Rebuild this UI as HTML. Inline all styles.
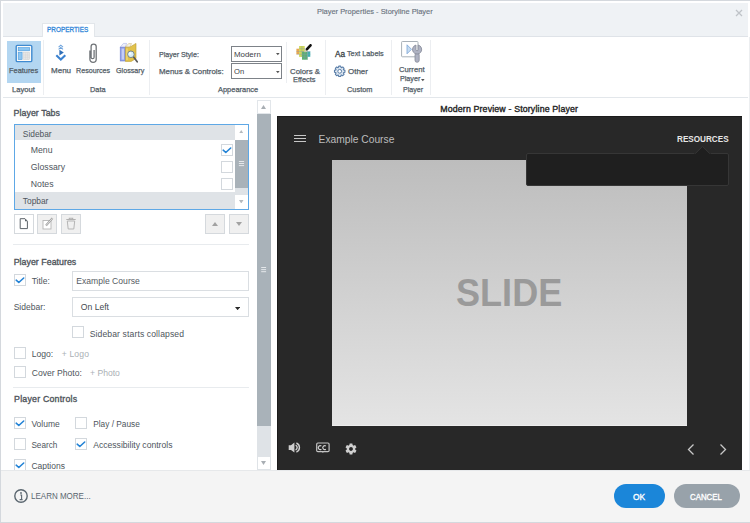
<!DOCTYPE html>
<html><head><meta charset="utf-8"><style>
html,body{margin:0;padding:0;}
body{width:750px;height:523px;position:relative;overflow:hidden;background:#fff;font-family:"Liberation Sans",sans-serif;}
body>div,body>svg{position:absolute;}
.t{white-space:nowrap;line-height:1;}
</style></head><body>
<div style="left:0px;top:0px;width:750px;height:1px;background:#d4d8dd"></div>
<div style="left:0px;top:0px;width:1px;height:523px;background:#d4d8dd"></div>
<div style="left:0px;top:522px;width:750px;height:1px;background:#d4d8dd"></div>
<div style="left:3px;top:3px;width:745px;height:34px;background:#eff2f5"></div>
<div style="left:3px;top:36px;width:745px;height:1px;background:#dfe3e8"></div>
<div class="t" style="left:317.3px;top:7.70px;font-size:8.0px;color:#6b7480;font-weight:400;-webkit-text-stroke:0.15px #6b7480;transform:scaleX(0.9294);transform-origin:0 0;">Player Properties - Storyline Player</div>
<svg style="left:735px;top:8.5px" width="8" height="8" viewBox="0 0 8 8"><path d="M1 1L7 7M7 1L1 7" stroke="#bfc3c8" stroke-width="1.3"/></svg>
<div style="left:41.5px;top:23px;width:53px;height:14px;background:#fff;border:1px solid #e2e6ea;border-bottom:none;box-sizing:border-box"></div>
<div class="t" style="left:47px;top:26.40px;font-size:7.8px;color:#2f86d8;font-weight:400;-webkit-text-stroke:0.3px #2f86d8;transform:scaleX(0.8217);transform-origin:0 0;">PROPERTIES</div>
<div style="left:3px;top:37px;width:745px;height:60px;background:#fff"></div>
<div style="left:3px;top:96.5px;width:745px;height:1px;background:#e3e7eb"></div>
<div style="left:43px;top:40px;width:1px;height:55px;background:#eceef1"></div>
<div style="left:149px;top:40px;width:1px;height:55px;background:#eceef1"></div>
<div style="left:325px;top:40px;width:1px;height:55px;background:#eceef1"></div>
<div style="left:391px;top:40px;width:1px;height:55px;background:#eceef1"></div>
<div style="left:430px;top:40px;width:1px;height:55px;background:#eceef1"></div>
<div style="left:285.5px;top:42px;width:1px;height:41px;background:#eceef1"></div>
<div style="left:7px;top:41px;width:34px;height:42px;background:#b3d6f1"></div>
<div class="t" style="left:9.2px;top:67.25px;font-size:7.9px;color:#515b65;font-weight:400;-webkit-text-stroke:0.25px #515b65;transform:scaleX(0.9367);transform-origin:0 0;">Features</div>
<div class="t" style="left:12.3px;top:85.95px;font-size:7.9px;color:#515b65;font-weight:400;-webkit-text-stroke:0.25px #515b65;transform:scaleX(0.9613);transform-origin:0 0;">Layout</div>
<div class="t" style="left:51px;top:67.25px;font-size:7.9px;color:#515b65;font-weight:400;-webkit-text-stroke:0.25px #515b65;transform:scaleX(1.0172);transform-origin:0 0;">Menu</div>
<div class="t" style="left:75.9px;top:67.25px;font-size:7.9px;color:#515b65;font-weight:400;-webkit-text-stroke:0.25px #515b65;transform:scaleX(0.9058);transform-origin:0 0;">Resources</div>
<div class="t" style="left:115.5px;top:67.25px;font-size:7.9px;color:#515b65;font-weight:400;-webkit-text-stroke:0.25px #515b65;transform:scaleX(0.9080);transform-origin:0 0;">Glossary</div>
<div class="t" style="left:89.8px;top:85.95px;font-size:7.9px;color:#515b65;font-weight:400;-webkit-text-stroke:0.25px #515b65;transform:scaleX(0.9349);transform-origin:0 0;">Data</div>
<div class="t" style="left:159px;top:50.95px;font-size:7.9px;color:#515b65;font-weight:400;-webkit-text-stroke:0.25px #515b65;transform:scaleX(0.8998);transform-origin:0 0;">Player Style:</div>
<div class="t" style="left:159px;top:68.15px;font-size:7.9px;color:#515b65;font-weight:400;-webkit-text-stroke:0.25px #515b65;transform:scaleX(0.9957);transform-origin:0 0;">Menus &amp; Controls:</div>
<div style="left:231px;top:46px;width:51px;height:15.5px;border:1px solid #7d8288;box-sizing:border-box;background:#fff"></div>
<div style="left:231px;top:63.2px;width:51px;height:16px;border:1px solid #7d8288;box-sizing:border-box;background:#fff"></div>
<div class="t" style="left:233.6px;top:50.95px;font-size:7.9px;color:#3c4046;font-weight:400;transform:scaleX(1.0006);transform-origin:0 0;">Modern</div>
<div class="t" style="left:233.6px;top:68.15px;font-size:7.9px;color:#3c4046;font-weight:400;transform:scaleX(0.9584);transform-origin:0 0;">On</div>
<svg style="left:276px;top:53.4px" width="4" height="3"><path d="M0 0H3.6L1.8 2.2Z" fill="#555"/></svg>
<svg style="left:276px;top:70.8px" width="4" height="3"><path d="M0 0H3.6L1.8 2.2Z" fill="#555"/></svg>
<div class="t" style="left:218.3px;top:85.95px;font-size:7.9px;color:#515b65;font-weight:400;-webkit-text-stroke:0.25px #515b65;transform:scaleX(0.9436);transform-origin:0 0;">Appearance</div>
<div class="t" style="left:289.8px;top:67.85px;font-size:7.9px;color:#515b65;font-weight:400;-webkit-text-stroke:0.25px #515b65;transform:scaleX(0.9904);transform-origin:0 0;">Colors &amp;</div>
<div class="t" style="left:293.1px;top:76.15px;font-size:7.9px;color:#515b65;font-weight:400;-webkit-text-stroke:0.25px #515b65;transform:scaleX(0.9374);transform-origin:0 0;">Effects</div>
<div class="t" style="left:334.9px;top:49.85px;font-size:8.3px;color:#3a3f45;font-weight:400;-webkit-text-stroke:0.3px #3a3f45;transform:scaleX(0.9949);transform-origin:0 0;">Aa</div>
<div class="t" style="left:347.3px;top:50.45px;font-size:7.9px;color:#515b65;font-weight:400;-webkit-text-stroke:0.25px #515b65;transform:scaleX(0.9184);transform-origin:0 0;">Text Labels</div>
<div class="t" style="left:347.9px;top:68.15px;font-size:7.9px;color:#515b65;font-weight:400;-webkit-text-stroke:0.25px #515b65;transform:scaleX(1.0073);transform-origin:0 0;">Other</div>
<div class="t" style="left:346.9px;top:86.15px;font-size:7.9px;color:#515b65;font-weight:400;-webkit-text-stroke:0.25px #515b65;transform:scaleX(0.9369);transform-origin:0 0;">Custom</div>
<div class="t" style="left:399.1px;top:66.25px;font-size:7.9px;color:#515b65;font-weight:400;-webkit-text-stroke:0.25px #515b65;transform:scaleX(0.9719);transform-origin:0 0;">Current</div>
<div class="t" style="left:400.1px;top:74.55px;font-size:7.9px;color:#515b65;font-weight:400;-webkit-text-stroke:0.25px #515b65;transform:scaleX(0.9066);transform-origin:0 0;">Player</div>
<svg style="left:421px;top:79px" width="4" height="3"><path d="M0 0H3.6L1.8 2.2Z" fill="#555"/></svg>
<div class="t" style="left:402.6px;top:86.15px;font-size:7.9px;color:#515b65;font-weight:400;-webkit-text-stroke:0.25px #515b65;transform:scaleX(0.8977);transform-origin:0 0;">Player</div>
<div class="t" style="left:13.6px;top:109.00px;font-size:8.8px;color:#50565c;font-weight:400;-webkit-text-stroke:0.35px #50565c;letter-spacing:0.053px;">Player Tabs</div>
<div style="left:14px;top:124px;width:235px;height:86px;border:1px solid #5ea8e6;box-sizing:border-box;background:#fff"></div>
<div style="left:15px;top:125px;width:220px;height:15px;background:#dfe3e7"></div>
<div style="left:15px;top:191.5px;width:220px;height:17.5px;background:#dfe3e7"></div>
<div class="t" style="left:22.8px;top:129.70px;font-size:8.4px;color:#4e555c;font-weight:400;">Sidebar</div>
<div class="t" style="left:30.8px;top:146.35px;font-size:8.7px;color:#4e555c;font-weight:400;">Menu</div>
<div class="t" style="left:30.8px;top:163.35px;font-size:8.7px;color:#4e555c;font-weight:400;">Glossary</div>
<div class="t" style="left:30.8px;top:180.35px;font-size:8.7px;color:#4e555c;font-weight:400;">Notes</div>
<div class="t" style="left:22.8px;top:196.60px;font-size:8.4px;color:#4e555c;font-weight:400;">Topbar</div>
<div style="left:235px;top:125px;width:13px;height:15px;background:#fff"></div>
<div style="left:235px;top:139.6px;width:13px;height:48.6px;background:#a9b2b9"></div>
<div style="left:235px;top:188.2px;width:13px;height:7px;background:#dfe3e7"></div>
<div style="left:235px;top:195px;width:13px;height:14px;background:#fff"></div>
<div style="left:221px;top:144px;width:12px;height:12px;border:1px solid #d3d8dd;box-sizing:border-box;background:#fff"></div>
<svg style="left:221px;top:144px" width="12" height="12" viewBox="0 0 12 12"><path d="M2.2 6.2L4.8 8.5L9.7 4" fill="none" stroke="#2383d6" stroke-width="1.6" stroke-linecap="round" stroke-linejoin="round"/></svg>
<div style="left:221px;top:161px;width:12px;height:12px;border:1px solid #d3d8dd;box-sizing:border-box;background:#fff"></div>
<div style="left:221px;top:178px;width:12px;height:12px;border:1px solid #d3d8dd;box-sizing:border-box;background:#fff"></div>
<div style="left:14px;top:214px;width:20px;height:20px;border:1px solid #d5d9dd;box-sizing:border-box;background:#fff"></div>
<div style="left:37.3px;top:214px;width:20px;height:20px;border:1px solid #d5d9dd;box-sizing:border-box;background:#f0f0f0"></div>
<div style="left:61px;top:214px;width:20px;height:20px;border:1px solid #d5d9dd;box-sizing:border-box;background:#f0f0f0"></div>
<div style="left:205px;top:214px;width:20px;height:20px;border:1px solid #d5d9dd;box-sizing:border-box;background:#f0f0f0"></div>
<div style="left:228.5px;top:214px;width:20px;height:20px;border:1px solid #d5d9dd;box-sizing:border-box;background:#f0f0f0"></div>
<div style="left:13px;top:244px;width:236px;height:1px;background:#e8ebee"></div>
<div class="t" style="left:13.7px;top:257.70px;font-size:8.8px;color:#50565c;font-weight:400;-webkit-text-stroke:0.35px #50565c;letter-spacing:0.033px;">Player Features</div>
<div style="left:14px;top:274px;width:12px;height:12px;border:1px solid #d3d8dd;box-sizing:border-box;background:#fff"></div>
<svg style="left:14px;top:274px" width="12" height="12" viewBox="0 0 12 12"><path d="M2.2 6.2L4.8 8.5L9.7 4" fill="none" stroke="#2383d6" stroke-width="1.6" stroke-linecap="round" stroke-linejoin="round"/></svg>
<div class="t" style="left:31.7px;top:277.35px;font-size:8.5px;color:#4e555c;font-weight:400;">Title:</div>
<div style="left:72px;top:271px;width:177px;height:20px;border:1px solid #dadee2;box-sizing:border-box;background:#fff"></div>
<div class="t" style="left:76.3px;top:277.30px;font-size:8.6px;color:#555c63;font-weight:400;">Example Course</div>
<div class="t" style="left:13.7px;top:303.45px;font-size:8.5px;color:#4e555c;font-weight:400;">Sidebar:</div>
<div style="left:72px;top:297px;width:177px;height:19.6px;border:1px solid #dadee2;box-sizing:border-box;background:#fff"></div>
<div class="t" style="left:80.8px;top:303.40px;font-size:8.6px;color:#444a50;font-weight:400;">On Left</div>
<svg style="left:235.3px;top:306.6px" width="5.2" height="3.2"><path d="M0 0H5.2L2.6 3.2Z" fill="#2a2a2a"/></svg>
<div style="left:72px;top:326.3px;width:12px;height:12px;border:1px solid #d3d8dd;box-sizing:border-box;background:#fff"></div>
<div class="t" style="left:89.7px;top:329.80px;font-size:8.6px;color:#4e555c;font-weight:400;letter-spacing:0.113px;">Sidebar starts collapsed</div>
<div style="left:14px;top:346.7px;width:12px;height:12px;border:1px solid #d3d8dd;box-sizing:border-box;background:#fff"></div>
<div class="t" style="left:31.7px;top:350.10px;font-size:8.6px;color:#4e555c;font-weight:400;">Logo:</div>
<div class="t" style="left:61.7px;top:350.10px;font-size:8.6px;color:#aab0b5;font-weight:400;letter-spacing:0.160px;">+ Logo</div>
<div style="left:14px;top:365.5px;width:12px;height:12px;border:1px solid #d3d8dd;box-sizing:border-box;background:#fff"></div>
<div class="t" style="left:31.7px;top:368.90px;font-size:8.6px;color:#4e555c;font-weight:400;">Cover Photo:</div>
<div class="t" style="left:90px;top:368.90px;font-size:8.6px;color:#aab0b5;font-weight:400;">+ Photo</div>
<div style="left:13px;top:387px;width:236px;height:1px;background:#e8ebee"></div>
<div class="t" style="left:14.1px;top:395.30px;font-size:8.8px;color:#50565c;font-weight:400;-webkit-text-stroke:0.35px #50565c;letter-spacing:0.210px;">Player Controls</div>
<div style="left:14px;top:417px;width:12px;height:12px;border:1px solid #d3d8dd;box-sizing:border-box;background:#fff"></div>
<svg style="left:14px;top:417px" width="12" height="12" viewBox="0 0 12 12"><path d="M2.2 6.2L4.8 8.5L9.7 4" fill="none" stroke="#2383d6" stroke-width="1.6" stroke-linecap="round" stroke-linejoin="round"/></svg>
<div class="t" style="left:31.4px;top:419.95px;font-size:8.5px;color:#4e555c;font-weight:400;">Volume</div>
<div style="left:75.3px;top:417px;width:12px;height:12px;border:1px solid #d3d8dd;box-sizing:border-box;background:#fff"></div>
<div class="t" style="left:93.2px;top:420.05px;font-size:8.3px;color:#4e555c;font-weight:400;">Play / Pause</div>
<div style="left:14px;top:438.3px;width:12px;height:12px;border:1px solid #d3d8dd;box-sizing:border-box;background:#fff"></div>
<div class="t" style="left:31.4px;top:442.10px;font-size:8.2px;color:#4e555c;font-weight:400;">Search</div>
<div style="left:75.3px;top:438.3px;width:12px;height:12px;border:1px solid #d3d8dd;box-sizing:border-box;background:#fff"></div>
<svg style="left:75.3px;top:438.3px" width="12" height="12" viewBox="0 0 12 12"><path d="M2.2 6.2L4.8 8.5L9.7 4" fill="none" stroke="#2383d6" stroke-width="1.6" stroke-linecap="round" stroke-linejoin="round"/></svg>
<div class="t" style="left:93.2px;top:441.40px;font-size:8.6px;color:#4e555c;font-weight:400;">Accessibility controls</div>
<div style="left:14px;top:459px;width:12px;height:12px;border:1px solid #d3d8dd;box-sizing:border-box;background:#fff"></div>
<svg style="left:14px;top:459px" width="12" height="12" viewBox="0 0 12 12"><path d="M2.2 6.2L4.8 8.5L9.7 4" fill="none" stroke="#2383d6" stroke-width="1.6" stroke-linecap="round" stroke-linejoin="round"/></svg>
<div class="t" style="left:31.4px;top:462.15px;font-size:8.5px;color:#4e555c;font-weight:400;">Captions</div>
<div style="left:257px;top:99.5px;width:14px;height:370.5px;background:#dfe3e7"></div>
<div style="left:257px;top:100px;width:14px;height:13.5px;background:#fff;border:1px solid #e2e6ea;box-sizing:border-box"></div>
<div style="left:257px;top:113.5px;width:14px;height:312px;background:#a9b2b9"></div>
<div style="left:257px;top:456px;width:14px;height:14px;background:#fff;border:1px solid #dfe3e7;box-sizing:border-box"></div>
<div class="t" style="left:440.2px;top:104.90px;font-size:8.8px;color:#222;font-weight:400;-webkit-text-stroke:0.35px #222;letter-spacing:0.151px;">Modern Preview - Storyline Player</div>
<div style="left:277px;top:116px;width:465px;height:354px;background:#282828;border-top:1px solid #1b1b1b;border-left:1px solid #1b1b1b;box-sizing:border-box"></div>
<div style="left:332px;top:160px;width:355px;height:266px;background:linear-gradient(#bdbdbd,#e4e4e4);border-bottom:1px solid #ededed;box-sizing:border-box"></div>
<div class="t" style="left:455.9px;top:274.40px;font-size:38.6px;color:#9a9a9a;font-weight:700;transform:scaleX(0.9352);transform-origin:0 0;">SLIDE</div>
<svg style="left:294px;top:135px" width="12" height="7"><path d="M0 0.5H12M0 3.5H12M0 6.5H12" stroke="#c8c8c8" stroke-width="1"/></svg>
<div class="t" style="left:318.6px;top:134.78px;font-size:10.25px;color:#bdbdbd;font-weight:400;">Example Course</div>
<div class="t" style="left:677.2px;top:135.15px;font-size:8.3px;color:#e6e6e6;font-weight:700;transform:scaleX(0.9814);transform-origin:0 0;">RESOURCES</div>
<div style="left:526px;top:153px;width:203px;height:32.5px;background:#1f1f1f;border:1px solid #363636;box-sizing:border-box;border-radius:2px"></div>
<svg style="left:694px;top:145px" width="17" height="10" viewBox="694 145 17 10"><path d="M694 153.5H695.5L702.5 146.4L709.5 153.5H711V155H694Z" fill="#1f1f1f"/><path d="M695.3 153.5L702.5 146.4L709.7 153.5" fill="none" stroke="#363636" stroke-width="1"/></svg>
<svg style="left:286px;top:440px" width="16" height="15" viewBox="286 440 16 15"><path d="M288.7 445.2H291L294.4 442.6V452.6L291 450H288.7Z" fill="#cfcfcf"/><path d="M295.6 445.2A2.6 2.6 0 0 1 295.6 450M296.4 443A5 5 0 0 1 296.4 452.2" fill="none" stroke="#cfcfcf" stroke-width="1.4"/></svg>
<svg style="left:315px;top:441px" width="16" height="14" viewBox="315 441 16 14"><rect x="316.7" y="443" width="12.4" height="8.6" rx="1.2" fill="none" stroke="#c4c4c4" stroke-width="1.2"/><path d="M321.8 451.4L322.9 453L324 451.4Z" fill="#c4c4c4"/><path d="M321.4 446A2 2 0 1 0 321.4 449.3M325.9 446A2 2 0 1 0 325.9 449.3" fill="none" stroke="#d0d0d0" stroke-width="1.2"/></svg>
<svg style="left:343.6px;top:441.6px" width="14" height="14" viewBox="0 0 24 24"><path fill="#cfcfcf" fill-rule="evenodd" d="M19.14 12.94c.04-.3.06-.61.06-.94 0-.32-.02-.64-.07-.94l2.03-1.58c.18-.14.23-.41.12-.61l-1.92-3.32c-.12-.22-.37-.29-.59-.22l-2.390.96c-.5-.38-1.03-.7-1.62-.94l-.36-2.54c-.04-.24-.24-.41-.48-.41h-3.84c-.24 0-.43.17-.47.41l-.36 2.54c-.59.24-1.13.57-1.62.94l-2.39-.96c-.22-.08-.47 0-.59.22L2.74 8.87c-.12.21-.08.47.12.61l2.03 1.58c-.05.3-.09.63-.09.94s.02.64.07.94l-2.03 1.58c-.18.14-.23.41-.12.61l1.92 3.320c.12.22.37.29.59.22l2.39-.96c.5.38 1.03.7 1.62.94l.36 2.54c.05.24.24.41.48.41h3.84c.24 0 .44-.17.47-.41l.36-2.54c.59-.24 1.13-.56 1.62-.94l2.39.96c.22.08.47 0 .59-.22l1.92-3.32c.12-.22.07-.47-.12-.61l-2.01-1.58zM12 15.3c-1.82 0-3.3-1.48-3.3-3.3s1.48-3.3 3.3-3.3 3.3 1.48 3.3 3.3-1.48 3.3-3.3 3.3z"/></svg>
<svg style="left:686.6px;top:443.5px" width="8" height="11"><path d="M6.5 0.5L1.5 5.5L6.5 10.5" fill="none" stroke="#c8c8c8" stroke-width="1.3"/></svg>
<svg style="left:718.7px;top:443.5px" width="8" height="11"><path d="M1.5 0.5L6.5 5.5L1.5 10.5" fill="none" stroke="#c8c8c8" stroke-width="1.3"/></svg>
<div style="left:749px;top:37px;width:1px;height:433px;background:#eceef0"></div>
<div style="left:1px;top:470px;width:749px;height:52px;background:#f4f4f4"></div>
<div style="left:1px;top:470px;width:749px;height:1px;background:#e6e8ea"></div>
<svg style="left:14px;top:489px" width="14" height="14" viewBox="0 0 14 14"><circle cx="7" cy="7" r="6.2" fill="none" stroke="#5b6770" stroke-width="1.4"/><circle cx="7" cy="4" r="0.9" fill="#5b6770"/><path d="M6.3 6H7.6V10.5M5.6 10.6H8.6" stroke="#5b6770" stroke-width="1.1" fill="none"/></svg>
<div class="t" style="left:30.6px;top:492.05px;font-size:8.7px;color:#5a6670;font-weight:400;transform:scaleX(0.9216);transform-origin:0 0;">LEARN MORE...</div>
<div style="left:614.3px;top:483.7px;width:51px;height:24.6px;background:#1b86d9;border-radius:13px"></div>
<div class="t" style="left:633px;top:492.75px;font-size:8.9px;color:#fff;font-weight:400;-webkit-text-stroke:0.35px #fff;transform:scaleX(0.9487);transform-origin:0 0;">OK</div>
<div style="left:674px;top:483.7px;width:66.4px;height:24.6px;background:#98a2aa;border-radius:13px"></div>
<div class="t" style="left:690.1px;top:492.75px;font-size:8.9px;color:#fff;font-weight:400;-webkit-text-stroke:0.35px #fff;transform:scaleX(0.8835);transform-origin:0 0;">CANCEL</div>
<svg style="left:14px;top:44px" width="20" height="20" viewBox="14 44 20 20"><rect x="16.2" y="45.4" width="15.6" height="16.2" rx="1.2" fill="#fdfbf8" stroke="#3f8ad0" stroke-width="1.4"/><rect x="18.2" y="47.6" width="11.4" height="3.2" fill="#8cc6f2" stroke="#4a98dc" stroke-width="0.6"/><rect x="18.2" y="52.2" width="3.9" height="7.4" fill="#8cc6f2" stroke="#4a98dc" stroke-width="0.6"/><rect x="23.6" y="52.2" width="6" height="7.4" fill="#e6e6e6" stroke="#cfcfcf" stroke-width="0.5"/><path d="M25.6 52.5V59.3M27.6 52.5V59.3M23.8 55H29.4M23.8 57.3H29.4" stroke="#d2d2d2" stroke-width="0.4"/></svg>
<svg style="left:53px;top:42px" width="16" height="20" viewBox="53 42 16 20"><path d="M56.3 55.2L60.8 59.6L65.3 55.2" fill="none" stroke="#3b82d0" stroke-width="2.1"/><path d="M59.4 49.8L63.8 52.6L59.4 55.6Z" fill="#2f6fb8"/><path d="M58.6 47.2L60.8 45.2L63 47.2M58.6 49.4L60.8 47.4L63 49.4" fill="none" stroke="#6ea3dc" stroke-width="1.1"/></svg>
<svg style="left:87px;top:42px" width="12" height="23" viewBox="87 42 12 23"><path d="M89.9 50.5V59.2A3.15 3.15 0 0 0 96.2 59.2V46.6A2.55 2.55 0 0 0 91.1 46.6V57.2A1.5 1.5 0 0 0 94.1 57.2V50" fill="none" stroke="#707478" stroke-width="1.3"/></svg>
<svg style="left:118px;top:41px" width="22" height="23" viewBox="118 41 22 23"><path d="M120.2 47.2L123.4 43.4H126.6L125.4 47.2Z" fill="#eef0fa" stroke="#9aa6e0" stroke-width="0.5"/><rect x="120.2" y="47.2" width="5.2" height="13.8" fill="#8f9fe8" stroke="#6f7fd0" stroke-width="0.6"/><rect x="121.6" y="48.6" width="2.4" height="11" fill="#c4cdf6"/><path d="M125.4 47.2L128.6 43.6H131.6L129.6 47.2Z" fill="#f4f2e6" stroke="#c8b070" stroke-width="0.5"/><path d="M125.4 47.2H129.6L136 43.4V58.6L131.2 61.4H125.4Z" fill="#e2c24a" stroke="#b89a30" stroke-width="0.6"/><path d="M127 48.5V60" stroke="#f2dc80" stroke-width="1.2"/><path d="M133.6 57L137.2 61.8" stroke="#5a5a5a" stroke-width="1.7" stroke-linecap="round"/><circle cx="130.9" cy="54.3" r="3.3" fill="#d8eef6" stroke="#6a7a84" stroke-width="0.9"/><circle cx="130" cy="53.4" r="1.2" fill="#f6fcff"/></svg>
<svg style="left:295px;top:44px" width="18" height="17" viewBox="295 44 18 17"><rect x="296.4" y="48.7" width="2.8" height="5.6" fill="#e8a850"/><rect x="299.1" y="46" width="5.6" height="10.9" fill="#cfd858"/><rect x="302" y="51.7" width="5.6" height="8" fill="#5ab070"/><rect x="307.3" y="51.5" width="3" height="5.3" fill="#40b0b0"/><path d="M296.4 51.5H310.3M296.4 54.3H310.3M299.1 48.7H304.7M302 57H307.6M301.9 46V57M304.8 48V59.7M307.5 51.5V59.7" stroke="#8a9aa8" stroke-width="0.5" opacity="0.8"/><path d="M304.6 52L307.5 48.5" stroke="#d8c8a0" stroke-width="1.4"/><path d="M307 49.2L310.5 45.3" stroke="#111" stroke-width="2.6" stroke-linecap="round"/></svg>
<svg style="left:333px;top:64px" width="14" height="15" viewBox="333 64 14 15"><path d="M343.42 69.84L344.92 70.37L344.92 72.23L343.42 72.76L343.36 72.90L344.05 74.33L342.73 75.65L341.30 74.96L341.16 75.02L340.63 76.52L338.77 76.52L338.24 75.02L338.10 74.96L336.67 75.65L335.35 74.33L336.04 72.90L335.98 72.76L334.48 72.23L334.48 70.37L335.98 69.84L336.04 69.70L335.35 68.27L336.67 66.95L338.10 67.64L338.24 67.58L338.77 66.08L340.63 66.08L341.16 67.58L341.30 67.64L342.73 66.95L344.05 68.27L343.36 69.70Z" fill="#dfe8f2" stroke="#5a7ea8" stroke-width="1.1" stroke-linejoin="round"/><circle cx="339.7" cy="71.3" r="1.9" fill="#fff" stroke="#5a7ea8" stroke-width="1"/></svg>
<svg style="left:400px;top:40px" width="24" height="24" viewBox="400 40 24 24"><rect x="401.6" y="41.5" width="16.4" height="15.3" rx="0.8" fill="#fff" stroke="#a9b1b8" stroke-width="1"/><path d="M407 44.8L411.5 49.3L407 53.8Z" fill="#c6dcf2" stroke="#7ba5d6" stroke-width="0.8"/><rect x="415" y="53" width="4.2" height="9.3" rx="2.1" fill="#aeb2c2" stroke="#858a98" stroke-width="0.8"/><path d="M416 45.03V49.6A1.1 1.1 0 0 0 418.2 49.6V45.03A4.6 4.6 0 1 1 416 45.03Z" fill="#aeb2c2" stroke="#858a98" stroke-width="0.8"/></svg>
<svg style="left:18px;top:216px" width="12" height="16" viewBox="18 216 12 16"><path d="M20.2 218.7H25L27.4 221.2V228.6H20.2Z" fill="#fff" stroke="#5c6369" stroke-width="1"/><path d="M25 218.7V221.2H27.4Z" fill="#5c6369"/></svg>
<svg style="left:41px;top:216px" width="14" height="16" viewBox="41 216 14 16"><rect x="43" y="220.5" width="8" height="8.5" fill="#fff" stroke="#b5b5b5" stroke-width="0.9"/><path d="M46 225.5L52.5 218.2" stroke="#9a9a9a" stroke-width="2"/><path d="M46 225.5L52.5 218.2" stroke="#f0f0f0" stroke-width="0.8"/></svg>
<svg style="left:64px;top:216px" width="14" height="16" viewBox="64 216 14 16"><path d="M66.3 219.5H75.7M69.3 219.5V218.3H72.7V219.5" fill="none" stroke="#b0b0b0" stroke-width="1.1"/><path d="M67.3 221H74.7L73.8 229H68.2Z" fill="none" stroke="#b5b5b5" stroke-width="1"/></svg>
<svg style="left:239.25px;top:129.75px" width="4.5" height="3.5" viewBox="239.25 129.75 4.5 3.5"><path d="M239.25 133.25H243.75L241.5 129.75Z" fill="#b4b9be"/></svg>
<svg style="left:239.25px;top:199.75px" width="4.5" height="3.5" viewBox="239.25 199.75 4.5 3.5"><path d="M239.25 199.75H243.75L241.5 203.25Z" fill="#b4b9be"/></svg>
<svg style="left:212.0px;top:222.0px" width="6" height="4" viewBox="212.0 222.0 6 4"><path d="M212.0 226.0H218.0L215 222.0Z" fill="#a2a2a2"/></svg>
<svg style="left:235.5px;top:221.5px" width="6" height="4" viewBox="235.5 221.5 6 4"><path d="M235.5 221.5H241.5L238.5 225.5Z" fill="#a2a2a2"/></svg>
<svg style="left:261.1px;top:105.0px" width="5" height="4" viewBox="261.1 105.0 5 4"><path d="M261.1 109.0H266.1L263.6 105.0Z" fill="#a8aeb3"/></svg>
<svg style="left:261.1px;top:461.0px" width="5" height="4" viewBox="261.1 461.0 5 4"><path d="M261.1 461.0H266.1L263.6 465.0Z" fill="#a8aeb3"/></svg>
<svg style="left:238px;top:159px" width="7" height="9" viewBox="238 159 7 9"><path d="M238.9 161.5H244.1M238.9 163.5H244.1M238.9 165.6H244.1" stroke="#e4e7ea" stroke-width="1"/></svg>
<svg style="left:260px;top:265px" width="8" height="9" viewBox="260 265 8 9"><path d="M261.2 267.5H266.1M261.2 269.6H266.1M261.2 271.7H266.1" stroke="#e4e7ea" stroke-width="1"/></svg>
</body></html>
